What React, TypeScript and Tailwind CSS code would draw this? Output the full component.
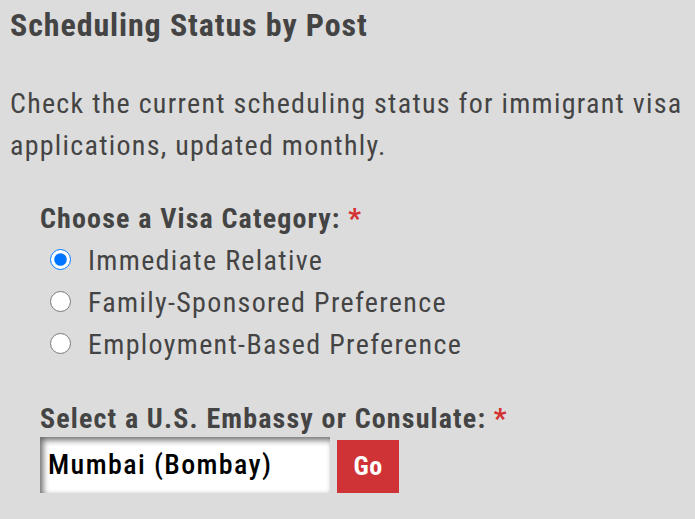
import React from "react";

const options: { label: string; checked: boolean }[] = [
  { label: "Immediate Relative", checked: true },
  { label: "Family-Sponsored Preference", checked: false },
  { label: "Employment-Based Preference", checked: false },
];

export default function App() {
  return (
    <div className="w-[695px] h-[519px] bg-[#dcdcdc] text-[#444444] overflow-hidden pl-[10px] font-['Roboto_Condensed',Roboto,'Liberation_Sans',sans-serif]">
      <h2 className="pt-[6px] text-[32px] leading-[38px] font-bold tracking-[0.9px]">
        Scheduling Status by Post
      </h2>
      <p className="mt-[39px] text-[28px] leading-[42px] w-[685px] tracking-[1.28px]">
        Check the current scheduling status for immigrant visa applications, updated monthly.
      </p>
      <div className="pl-[30px] mt-[31px]">
        <div className="text-[28px] leading-[42px] font-bold tracking-[1.15px]">
          Choose a Visa Category: <span className="text-[#d33131]">*</span>
        </div>
        <div className="flex flex-col">
          {options.map((o) => (
            <label key={o.label} className="flex items-center h-[42px] text-[28px] tracking-[1.33px]">
              <input
                type="radio"
                name="cat"
                defaultChecked={o.checked}
                className="ml-[10px] mt-[-3px] w-[21px] h-[21px] accent-[#0075ff]"
              />
              <span className="ml-[17px]">{o.label}</span>
            </label>
          ))}
        </div>
        <div className="mt-[32px] text-[28px] leading-[42px] font-bold tracking-[1.15px]">
          Select a U.S. Embassy or Consulate: <span className="text-[#d33131]">*</span>
        </div>
        <div className="flex items-end gap-[7px] mt-[-3px]">
          <div className="w-[290px] h-[56px] bg-white shadow-[inset_3px_3px_6px_rgba(0,0,0,0.6)] flex items-center pl-[8px] text-black text-[28px] font-medium tracking-[1.4px]">
            Mumbai (Bombay)
          </div>
          <button className="w-[62px] h-[53px] bg-[#d03335] text-white text-[26px] font-bold tracking-[0.5px]">
            Go
          </button>
        </div>
      </div>
    </div>
  );
}
